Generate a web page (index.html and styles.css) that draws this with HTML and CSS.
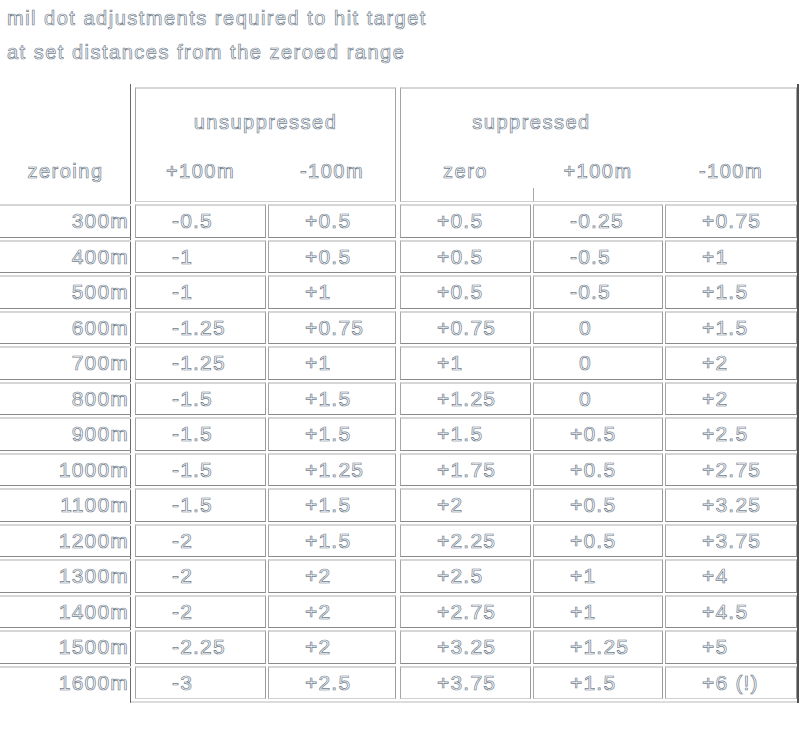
FILE: index.html
```html
<!DOCTYPE html>
<html>
<head>
<meta charset="utf-8">
<link rel="stylesheet" href="styles.css">
</head>
<body>
<p class="title">mil dot adjustments required to hit target<br>at set distances from the zeroed range</p>
<div class="table">
  <div class="head">
    <div class="box box-un"></div>
    <div class="box box-su"></div>
    <div class="grp grp-un">unsuppressed</div>
    <div class="grp grp-su">suppressed</div>
    <div class="sub s0">zeroing</div>
    <div class="sub s1">+100m</div>
    <div class="sub s2">-100m</div>
    <div class="sub s3">zero</div>
    <div class="sub s4">+100m</div>
    <div class="sub s5">-100m</div>
    <div class="tick"></div>
  </div>
  <div class="body">
    <div class="z">300m</div><div class="c">-0.5</div><div class="c">+0.5</div><div class="c">+0.5</div><div class="c">-0.25</div><div class="c">+0.75</div>
    <div class="z">400m</div><div class="c">-1</div><div class="c">+0.5</div><div class="c">+0.5</div><div class="c">-0.5</div><div class="c">+1</div>
    <div class="z">500m</div><div class="c">-1</div><div class="c">+1</div><div class="c">+0.5</div><div class="c">-0.5</div><div class="c">+1.5</div>
    <div class="z">600m</div><div class="c">-1.25</div><div class="c">+0.75</div><div class="c">+0.75</div><div class="c nosign">0</div><div class="c">+1.5</div>
    <div class="z">700m</div><div class="c">-1.25</div><div class="c">+1</div><div class="c">+1</div><div class="c nosign">0</div><div class="c">+2</div>
    <div class="z">800m</div><div class="c">-1.5</div><div class="c">+1.5</div><div class="c">+1.25</div><div class="c nosign">0</div><div class="c">+2</div>
    <div class="z">900m</div><div class="c">-1.5</div><div class="c">+1.5</div><div class="c">+1.5</div><div class="c">+0.5</div><div class="c">+2.5</div>
    <div class="z">1000m</div><div class="c">-1.5</div><div class="c">+1.25</div><div class="c">+1.75</div><div class="c">+0.5</div><div class="c">+2.75</div>
    <div class="z">1100m</div><div class="c">-1.5</div><div class="c">+1.5</div><div class="c">+2</div><div class="c">+0.5</div><div class="c">+3.25</div>
    <div class="z">1200m</div><div class="c">-2</div><div class="c">+1.5</div><div class="c">+2.25</div><div class="c">+0.5</div><div class="c">+3.75</div>
    <div class="z">1300m</div><div class="c">-2</div><div class="c">+2</div><div class="c">+2.5</div><div class="c">+1</div><div class="c">+4</div>
    <div class="z">1400m</div><div class="c">-2</div><div class="c">+2</div><div class="c">+2.75</div><div class="c">+1</div><div class="c">+4.5</div>
    <div class="z">1500m</div><div class="c">-2.25</div><div class="c">+2</div><div class="c">+3.25</div><div class="c">+1.25</div><div class="c">+5</div>
    <div class="z">1600m</div><div class="c">-3</div><div class="c">+2.5</div><div class="c">+3.75</div><div class="c">+1.5</div><div class="c">+6 (!)</div>
  </div>
</div>
</body>
</html>
```

FILE: styles.css
```css
html, body {
  margin: 0;
  padding: 0;
  background: #fff;
}

body {
  font-family: "Liberation Sans", Arial, sans-serif;
  color: #fff;
  -webkit-text-stroke: 0.7px #707e8e;
}

.title {
  margin: 0;
  padding: 1px 0 0 7px;
  font-size: 20px;
  line-height: 34px;
  letter-spacing: 1.5px;
}

.table {
  width: 797px;
  margin-top: 15px;
  padding-top: 3px;
  border-right: 2px solid #505050;
  background: linear-gradient(#6a6a6a, #6a6a6a) 130px 0 / 1px 100% no-repeat;
}

.table::after {
  content: "";
  display: block;
  height: 2px;
  margin: 2px 0 0 131px;
  background: #dcdcdc;
}

.head,
.body {
  display: grid;
  grid-template-columns: 131px 133px 128px 133px 130px 132px;
  column-gap: 2px;
}

.head {
  grid-template-rows: 68px 45px;
  row-gap: 2px;
  margin-bottom: 2px;
}

.box {
  grid-row: 1 / 3;
  margin-left: 2px;
  border-top: 2px solid #d6d6d6;
  border-left: 1px solid #a2a2a2;
  border-right: 1px solid #a2a2a2;
  border-bottom: 1px solid #d0d0d0;
}

.box-un { grid-column: 2 / 4; }
.box-su { grid-column: 4 / 7; }

.grp {
  grid-row: 1;
  align-self: center;
  padding-top: 2px;
  text-align: center;
  font-size: 20px;
  line-height: 24px;
  letter-spacing: 1.5px;
}

.grp-un { grid-column: 2 / 4; padding-left: 2px; }
.grp-su { grid-column: 4 / 6; padding-left: 2px; }

.sub {
  grid-row: 2;
  align-self: start;
  padding-top: 2px;
  text-align: center;
  font-size: 20px;
  line-height: 24px;
  letter-spacing: 1.5px;
}

.s0 { grid-column: 1; }
.s1 { grid-column: 2; padding-left: 2px; }
.s2 { grid-column: 3; }
.s3 { grid-column: 4; padding-left: 2px; }
.s4 { grid-column: 5; }
.s5 { grid-column: 6; }

.tick {
  grid-row: 2;
  grid-column: 5;
  align-self: end;
  height: 13px;
  margin-bottom: 1px;
  border-left: 1px solid #a8a8a8;
}

.body {
  grid-auto-rows: 33.5px;
  row-gap: 2px;
  font-size: 21px;
  letter-spacing: 1.2px;
}

.z,
.c {
  display: flex;
  align-items: center;
  border-top: 2px solid #d6d6d6;
  border-bottom: 1px solid #8a8a8a;
}

.z {
  justify-content: flex-end;
  padding-right: 2px;
}

.c {
  padding-left: 36px;
  border-left: 1px solid #a6a6a6;
  border-right: 1px solid #9a9a9a;
}

.c:nth-child(6n+2),
.c:nth-child(6n+4) {
  margin-left: 2px;
}

.c.nosign {
  padding-left: 45px;
}

.body > :nth-last-child(-n+5) {
  border-bottom-color: #cfcfcf;
}

.body > :nth-last-child(6) {
  border-bottom-color: transparent;
}
```
